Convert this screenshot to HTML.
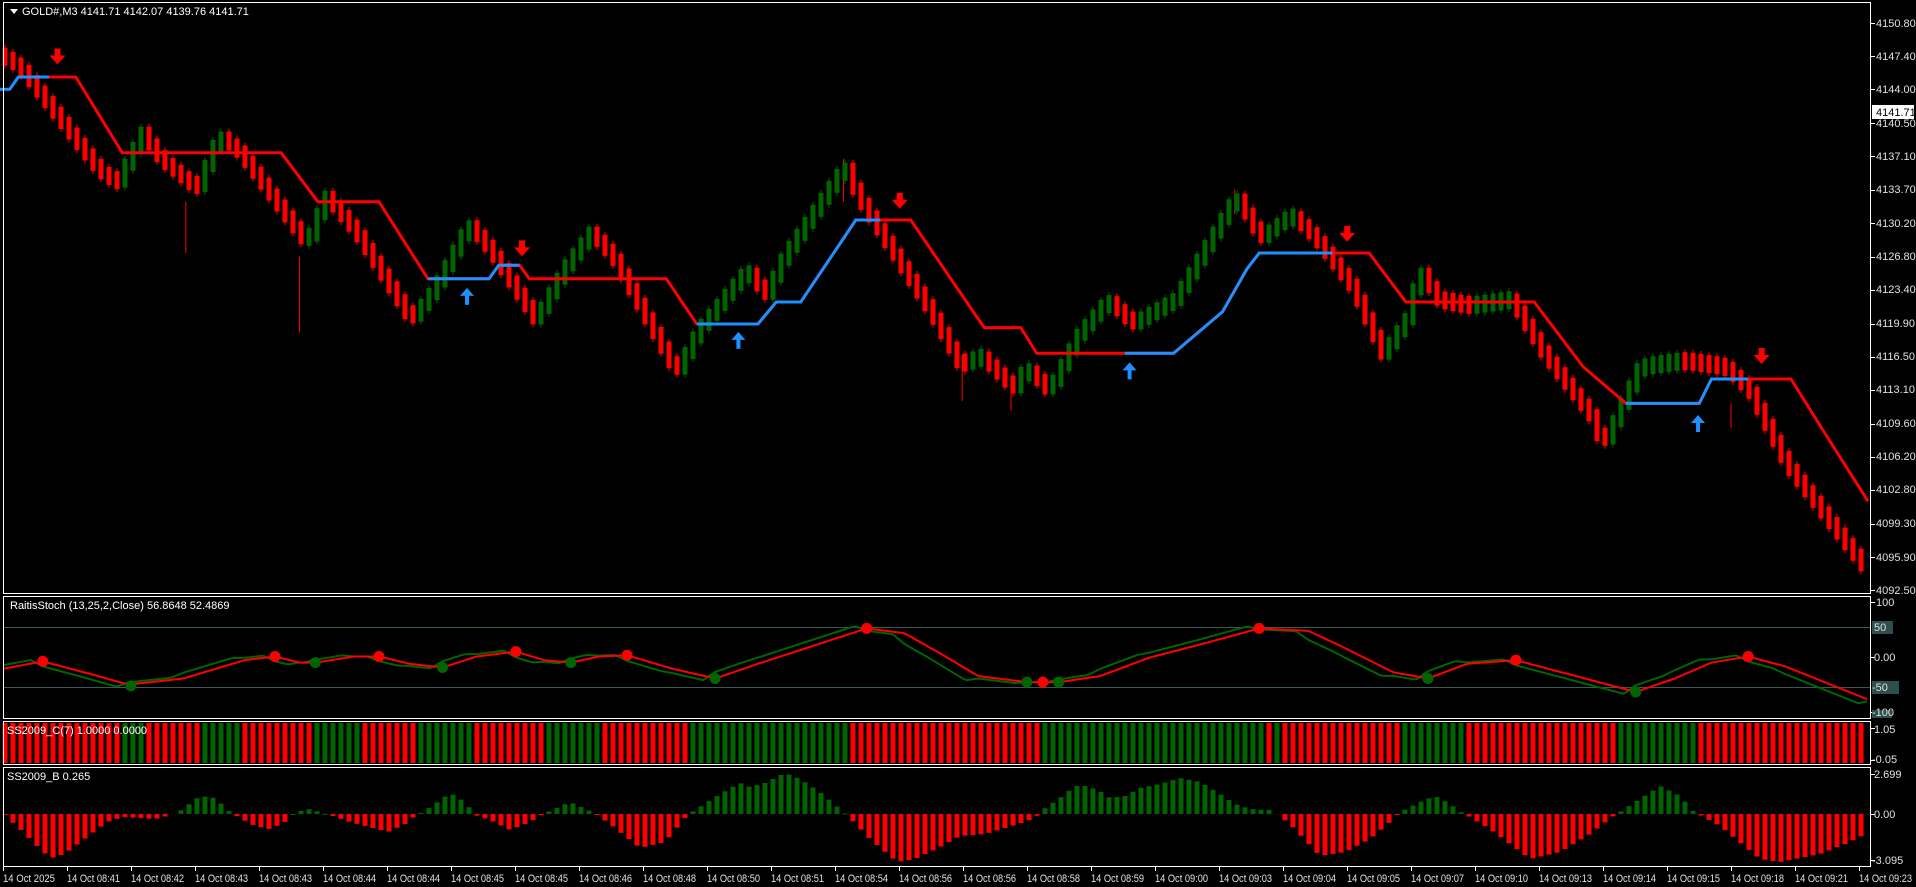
<!DOCTYPE html>
<html><head><meta charset="utf-8"><style>
html,body{margin:0;padding:0;background:#000;width:1916px;height:887px;overflow:hidden}
svg{display:block}
text{font-family:"Liberation Sans",sans-serif;font-size:11px;fill:#e0e0e0}
</style></head><body>
<svg id="c" width="1916" height="887" xmlns="http://www.w3.org/2000/svg">
<rect width="1916" height="887" fill="#000"/>
<g id="dyn"></g>
<g fill="none" stroke="#fff" stroke-width="1">
<rect x="3.5" y="2.5" width="1867" height="591"/>
<rect x="3.5" y="596.5" width="1867" height="122"/>
<rect x="3.5" y="721.5" width="1867" height="43"/>
<rect x="3.5" y="767.5" width="1867" height="99"/>
</g>
<path d="M10 9 l8 0 l-4 5 z" fill="#fff"/>
<text x="22" y="15" style="font-size:11px;fill:#fff">GOLD#,M3  4141.71 4142.07 4139.76 4141.71</text>
<text x="10" y="609" style="fill:#fff">RaitisStoch (13,25,2,Close) 56.8648 52.4869</text>
<text x="7" y="734" style="fill:#fff">SS2009_C(7) 1.0000 0.0000</text>
<text x="7" y="780" style="fill:#fff">SS2009_B 0.265</text>
<g>
<text x="1876" y="27">4150.80</text>
<text x="1876" y="60">4147.40</text>
<text x="1876" y="93">4144.00</text>
<text x="1876" y="127">4140.50</text>
<text x="1876" y="160">4137.10</text>
<text x="1876" y="193">4133.70</text>
<text x="1876" y="227">4130.20</text>
<text x="1876" y="260">4126.80</text>
<text x="1876" y="293">4123.40</text>
<text x="1876" y="327">4119.90</text>
<text x="1876" y="360">4116.50</text>
<text x="1876" y="393">4113.10</text>
<text x="1876" y="427">4109.60</text>
<text x="1876" y="460">4106.20</text>
<text x="1876" y="493">4102.80</text>
<text x="1876" y="527">4099.30</text>
<text x="1876" y="561">4095.90</text>
<text x="1876" y="594">4092.50</text>
<rect x="1872" y="105" width="42" height="14" fill="#fff"/>
<text x="1876" y="116" style="fill:#000">4141.71</text>
<text x="1876" y="606">100</text>
<rect x="1872" y="621" width="21" height="13" fill="#2f4f4f"/>
<text x="1874" y="631">50</text>
<text x="1874" y="661">0.00</text>
<rect x="1872" y="681" width="27" height="13" fill="#2f4f4f"/>
<text x="1872" y="691">-50</text>
<rect x="1872" y="710" width="20" height="8" fill="#2f4f4f"/>
<text x="1872" y="716">-100</text>
<text x="1874" y="733">1.05</text>
<text x="1872" y="763">-0.05</text>
<text x="1874" y="778">2.699</text>
<text x="1874" y="818">0.00</text>
<text x="1872" y="864">-3.095</text>
</g>
<g>
<text x="3" y="882" textLength="52" lengthAdjust="spacingAndGlyphs">14 Oct 2025</text>
<text x="67" y="882" textLength="53" lengthAdjust="spacingAndGlyphs">14 Oct 08:41</text>
<text x="131" y="882" textLength="53" lengthAdjust="spacingAndGlyphs">14 Oct 08:42</text>
<text x="195" y="882" textLength="53" lengthAdjust="spacingAndGlyphs">14 Oct 08:43</text>
<text x="259" y="882" textLength="53" lengthAdjust="spacingAndGlyphs">14 Oct 08:43</text>
<text x="323" y="882" textLength="53" lengthAdjust="spacingAndGlyphs">14 Oct 08:44</text>
<text x="387" y="882" textLength="53" lengthAdjust="spacingAndGlyphs">14 Oct 08:44</text>
<text x="451" y="882" textLength="53" lengthAdjust="spacingAndGlyphs">14 Oct 08:45</text>
<text x="515" y="882" textLength="53" lengthAdjust="spacingAndGlyphs">14 Oct 08:45</text>
<text x="579" y="882" textLength="53" lengthAdjust="spacingAndGlyphs">14 Oct 08:46</text>
<text x="643" y="882" textLength="53" lengthAdjust="spacingAndGlyphs">14 Oct 08:48</text>
<text x="707" y="882" textLength="53" lengthAdjust="spacingAndGlyphs">14 Oct 08:50</text>
<text x="771" y="882" textLength="53" lengthAdjust="spacingAndGlyphs">14 Oct 08:51</text>
<text x="835" y="882" textLength="53" lengthAdjust="spacingAndGlyphs">14 Oct 08:54</text>
<text x="899" y="882" textLength="53" lengthAdjust="spacingAndGlyphs">14 Oct 08:56</text>
<text x="963" y="882" textLength="53" lengthAdjust="spacingAndGlyphs">14 Oct 08:56</text>
<text x="1027" y="882" textLength="53" lengthAdjust="spacingAndGlyphs">14 Oct 08:58</text>
<text x="1091" y="882" textLength="53" lengthAdjust="spacingAndGlyphs">14 Oct 08:59</text>
<text x="1155" y="882" textLength="53" lengthAdjust="spacingAndGlyphs">14 Oct 09:00</text>
<text x="1219" y="882" textLength="53" lengthAdjust="spacingAndGlyphs">14 Oct 09:03</text>
<text x="1283" y="882" textLength="53" lengthAdjust="spacingAndGlyphs">14 Oct 09:04</text>
<text x="1347" y="882" textLength="53" lengthAdjust="spacingAndGlyphs">14 Oct 09:05</text>
<text x="1411" y="882" textLength="53" lengthAdjust="spacingAndGlyphs">14 Oct 09:07</text>
<text x="1475" y="882" textLength="53" lengthAdjust="spacingAndGlyphs">14 Oct 09:10</text>
<text x="1539" y="882" textLength="53" lengthAdjust="spacingAndGlyphs">14 Oct 09:13</text>
<text x="1603" y="882" textLength="53" lengthAdjust="spacingAndGlyphs">14 Oct 09:14</text>
<text x="1667" y="882" textLength="53" lengthAdjust="spacingAndGlyphs">14 Oct 09:15</text>
<text x="1731" y="882" textLength="53" lengthAdjust="spacingAndGlyphs">14 Oct 09:18</text>
<text x="1795" y="882" textLength="53" lengthAdjust="spacingAndGlyphs">14 Oct 09:21</text>
<text x="1859" y="882" textLength="53" lengthAdjust="spacingAndGlyphs">14 Oct 09:23</text>
</g>
</svg>
<script>
(function(){
const S=1/0.818;
function lerp(p,x){if(x<=p[0][0])return p[0][1];for(let i=1;i<p.length;i++){if(x<=p[i][0]){const a=p[i-1],b=p[i];return a[1]+(b[1]-a[1])*(x-a[0])/(b[0]-a[0]);}}return p[p.length-1][1];}
const sc=a=>a.map(p=>[p[0]*S,p[1]*S]);
let s='';
for(let k=0;k<30;k++){const x=3+64*k;s+=`<line x1="${x+.5}" y1="866" x2="${x+.5}" y2="871" stroke="#fff"/>`;}
for(let y of [23,56,89,123,156,190,223,257,290,324,357,390,424,457,490,524,557,590,602,657,712,728,760,774,814,860]){s+=`<line x1="1871" y1="${y+.5}" x2="1875" y2="${y+.5}" stroke="#fff"/>`;}
s+=`<line x1="4" y1="627.5" x2="1870" y2="627.5" stroke="#3a5a5a"/><line x1="4" y1="687.5" x2="1870" y2="687.5" stroke="#3a5a5a"/>`;
const M=sc([[0,45],[15,55],[80,140],[95,150],[115,108],[130,130],[160,155],[178,110],[195,125],[250,200],[265,160],[290,190],[335,262],[355,235],[382,183],[400,205],[437,262],[460,220],[482,190],[500,210],[552,305],[570,270],[610,220],[625,242],[640,210],[690,135],[700,160],[760,255],[785,300],[800,290],[828,318],[838,300],[857,320],[880,275],[905,245],[925,265],[960,245],[1010,160],[1030,195],[1055,175],[1075,195],[1105,235],[1130,290],[1150,260],[1160,220],[1175,245],[1200,250],[1235,245],[1262,290],[1300,340],[1310,365],[1340,300],[1375,295],[1410,300],[1430,320],[1460,380],[1528,470]]);
const G='#006400',R='#ff0000';
for(const w of [[152,165,207],[245,210,272],[787,290,328],[1416,330,350],[827,318,336],[690,130,165],[1010,155,175]]){s+=`<line x1="${w[0]*S}" y1="${w[1]*S}" x2="${w[0]*S}" y2="${w[2]*S}" stroke="${R}" stroke-width="1"/>`;}
for(let i=0;i<233;i++){const x=5+8*i;if(x>1868)break;const a=lerp(M,x-8),b=lerp(M,x);let t=Math.min(a,b)-6,bt=Math.max(a,b)+6;if(bt-t<18){const m=(t+bt)/2;t=m-9;bt=m+9;}const c=b>a?R:G;
s+=`<line x1="${x}" y1="${t-3}" x2="${x}" y2="${bt+3}" stroke="${c}"/><rect x="${x-2.5}" y="${t}" width="5" height="${bt-t}" fill="${c}"/>`;}
const red=sc([[15,63],[62,63],[100,125],[230,125],[260,165],[310,165],[350,228],[400,228],[408,217],[425,217],[433,228],[545,228],[570,265],[620,265],[635,247],[655,247],[690,195],[700,180],[745,180],[805,268],[835,268],[848,289],[960,289],[1000,255],[1020,220],[1030,207],[1120,207],[1150,247],[1255,247],[1295,300],[1330,330],[1390,330],[1400,310],[1465,310],[1490,350],[1528,410]]);
s+=`<polyline points="${red.map(p=>p.join(',')).join(' ')}" fill="none" stroke="${R}" stroke-width="3"/>`;
const blues=[[[0,73],[8,73],[15,63],[40,63]],[[350,228],[400,228],[408,217],[425,217]],[[570,265],[620,265],[635,247],[655,247],[690,195],[700,180],[720,180]],[[920,289],[960,289],[1000,255],[1020,220],[1030,207],[1090,207]],[[1330,330],[1390,330],[1400,310],[1430,310]]];
for(const b of blues)s+=`<polyline points="${sc(b).map(p=>p.join(',')).join(' ')}" fill="none" stroke="#1e90ff" stroke-width="3"/>`;
for(const a of [[47,47],[427,204],[736,165],[1102,192],[1441,292]]){const x=a[0]*S,y=a[1]*S;s+=`<path d="M${x-3},${y-9}h6v7h5l-8,9l-8,-9h5z" fill="${R}"/>`;}
for(const a of [[382,242],[604,278],[924,303],[1389,346]]){const x=a[0]*S,y=a[1]*S;s+=`<path d="M${x-2},${y+9}h4v-9h5l-7,-8l-7,8h5z" fill="#1e90ff"/>`;}
const SR=sc([[3,547],[35,541],[80,553],[105,560],[150,555],[200,540],[225,537],[245,542],[258,542],[290,537],[310,537],[335,543],[362,546],[390,537],[422,533],[445,540],[467,542],[490,537],[513,536],[550,547],[585,555],[620,543],[660,530],[709,514],[740,518],[770,535],[800,553],[840,558],[853,558],[866,558],[900,553],[940,538],[990,525],[1030,514],[1070,516],[1100,530],[1140,550],[1168,555],[1200,543],[1240,540],[1270,548],[1338,566],[1370,555],[1400,542],[1430,537],[1460,545],[1530,573]]);
let pr=[],pg=[];for(let x=4;x<=1869;x+=3){pr.push(x+','+lerp(SR,x).toFixed(1));pg.push(x+','+(lerp(SR,x+12)+ (lerp(SR,x+12)-lerp(SR,x))*0.6).toFixed(1));}
s+=`<polyline points="${pg.join(' ')}" fill="none" stroke="${G}" stroke-width="2"/><polyline points="${pr.join(' ')}" fill="none" stroke="${R}" stroke-width="2"/>`;
for(const d of [[35,541],[225,537],[310,537],[422,533],[513,536],[709,514],[853,558],[1030,514],[1240,540],[1430,537]])s+=`<circle cx="${d[0]*S}" cy="${d[1]*S}" r="5.5" fill="${R}"/>`;
for(const d of [[107,561],[258,542],[362,546],[467,542],[585,555],[840,558],[866,558],[1168,555],[1338,566]])s+=`<circle cx="${d[0]*S}" cy="${d[1]*S}" r="5.5" fill="${G}"/>`;
const gr=[[0,4],[121,144],[201,239],[314,361],[418,472],[545,597],[689,845],[1041,1266],[1273,1277],[1400,1462],[1618,1694]];
for(let i=0;i<233;i++){const x=5+8*i;if(x>1868)break;const g=gr.some(r=>x>=r[0]&&x<=r[1]);s+=`<rect x="${x-2.5}" y="723" width="5" height="40" fill="${g?G:R}"/>`;}
const BK=[[3,1],[11,-7],[19,-14],[27,-22],[35,-30],[43,-38],[51,-44],[59,-42],[67,-38],[75,-32],[91,-20],[107,-8],[123,-3],[155,-5],[171,-1],[180,3],[200,18],[215,16],[230,2],[240,-4],[255,-12],[270,-15],[285,-8],[295,2],[310,5],[322,1],[330,-1],[350,-8],[388,-18],[405,-10],[416,-1],[425,3],[450,21],[465,12],[475,-1],[490,-6],[510,-16],[530,-8],[543,0],[550,3],[570,12],[590,3],[597,-1],[610,-10],[640,-34],[665,-28],[686,-3],[692,2],[720,20],[740,31],[750,27],[765,31],[785,41],[800,35],[820,22],[840,5],[848,-2],[870,-25],[897,-48],[915,-45],[940,-33],[960,-22],[985,-20],[1005,-14],[1025,-8],[1036,-3],[1041,3],[1060,16],[1075,28],[1085,28],[1098,24],[1110,16],[1125,18],[1140,26],[1160,30],[1180,36],[1200,32],[1220,20],[1235,10],[1250,5],[1272,4],[1278,-1],[1290,-10],[1320,-42],[1345,-38],[1370,-25],[1390,-8],[1397,-1],[1402,3],[1420,12],[1435,18],[1450,10],[1462,1],[1468,-2],[1490,-15],[1530,-45],[1560,-38],[1590,-20],[1612,-3],[1620,2],[1640,15],[1660,28],[1680,18],[1694,2],[1700,-1],[1720,-12],[1760,-45],[1780,-48],[1820,-40],[1850,-28],[1871,-17]];
for(let i=0;i<233;i++){const x=5+8*i;if(x>1868)break;const h=lerp(BK,x);if(h>=0)s+=`<rect x="${x-2.5}" y="${814-h}" width="5" height="${Math.max(h,1)}" fill="${G}"/>`;else s+=`<rect x="${x-2.5}" y="814" width="5" height="${-h}" fill="${R}"/>`;}
document.getElementById('dyn').innerHTML=s;
})();
</script>
</body></html>
